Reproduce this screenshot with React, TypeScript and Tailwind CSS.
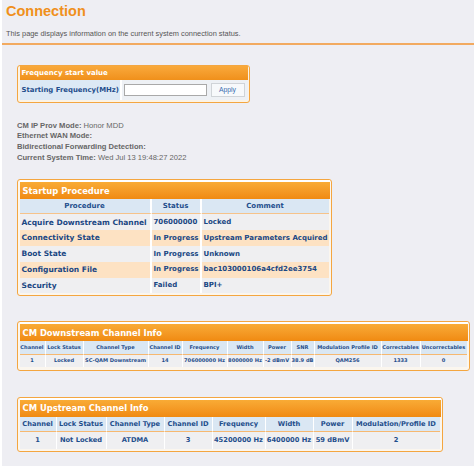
const sans = "font-['Liberation_Sans',Arial,sans-serif]";
const dv = "font-['DejaVu_Sans',Verdana,sans-serif]";

const startup = [
  ["Acquire Downstream Channel", "706000000", "Locked"],
  ["Connectivity State", "In Progress", "Upstream Parameters Acquired"],
  ["Boot State", "In Progress", "Unknown"],
  ["Configuration File", "In Progress", "bac103000106a4cfd2ee3754"],
  ["Security", "Failed", "BPI+"],
];

const downHead = [
  "Channel",
  "Lock Status",
  "Channel Type",
  "Channel ID",
  "Frequency",
  "Width",
  "Power",
  "SNR",
  "Modulation Profile ID",
  "Correctables",
  "Uncorrectables",
];
const downRow = ["1", "Locked", "SC-QAM Downstream", "14", "706000000 Hz", "8000000 Hz", "-2 dBmV", "38.9 dB", "QAM256", "1333", "0"];

const upHead = ["Channel", "Lock Status", "Channel Type", "Channel ID", "Frequency", "Width", "Power", "Modulation/Profile ID"];
const upRow = ["1", "Not Locked", "ATDMA", "3", "45200000 Hz", "6400000 Hz", "59 dBmV", "2"];

function BoxHeader({ title }: { title: string }) {
  return (
    <div className="h-[19px] border-t-2 border-white bg-linear-to-b from-[#f9ab35] to-[#f08a10] px-[3px] flex items-center">
      <span className="text-[8.4px] font-bold text-white leading-none">{title}</span>
    </div>
  );
}

export default function App() {
  return (
    <div className="w-[474px] h-[471px] bg-white overflow-hidden">
      <div className="h-[466px] bg-[#eeeef3] ml-[2px]">
        {/* Title */}
        <div className="px-[4px] pt-[3px]">
          <h1 className={`${sans} text-[14.5px] font-bold text-[#f0901c] leading-[17px]`}>Connection</h1>
          <p className={`${sans} text-[7.4px] text-[#555] mt-[9px] leading-[10px]`}>
            This page displays information on the current system connection status.
          </p>
        </div>
        <div className="h-[2px] bg-[#f2aa60] mt-[4px]" />

        <div className={`${dv} ml-[15px]`}>
          {/* Frequency start value */}
          <div className="mt-[20px] w-[233px] rounded-[3px] border-[1.5px] border-[#f4a640] bg-[#fbf3e6] px-[1.5px] pb-[1.5px]">
            <div className="h-[14px] bg-linear-to-b from-[#f9a93a] to-[#f0901a] px-[2px] flex items-center">
              <span className="text-[7px] font-bold text-white leading-none">Frequency start value</span>
            </div>
            <div className="flex h-[20px]">
              <div className="w-[102px] bg-[#dce9f5] border-r-[2px] border-white flex items-center px-[2px]">
                <span className="text-[6.9px] font-bold text-[#1f4e8c] whitespace-nowrap">Starting Frequency(MHz)</span>
              </div>
              <div className="flex-1 bg-[#eef1f5] flex items-center pl-[2px] gap-[4px]">
                <div className="w-[83px] h-[12px] bg-white border border-[#a9a9a9]" />
                <div className="w-[34px] h-[14px] bg-[#f7f9fb] border border-[#d0d4d8] flex items-center justify-center">
                  <span className={`${sans} text-[6.8px] text-[#3a6db0]`}>Apply</span>
                </div>
              </div>
            </div>
          </div>

          {/* Info lines */}
          <div className={`${sans} mt-[18px] text-[7.6px] leading-[10.7px] text-[#666]`}>
            <div>
              <b>CM IP Prov Mode:</b> Honor MDD
            </div>
            <div>
              <b>Ethernet WAN Mode:</b>
            </div>
            <div>
              <b>Bidirectional Forwarding Detection:</b>
            </div>
            <div>
              <b>Current System Time:</b> Wed Jul 13 19:48:27 2022
            </div>
          </div>

          {/* Startup Procedure */}
          <div className="mt-[16px] w-[315px] rounded-[3px] border-[1.5px] border-[#f4a640] bg-[#fbf6ee] px-[1.5px] pb-[2px]">
            <BoxHeader title="Startup Procedure" />
            <div className="grid grid-cols-[132px_50px_127px]">
              {["Procedure", "Status", "Comment"].map((h, i) => (
                <div
                  key={h}
                  className={`h-[15px] bg-[#dae7f3] border-b border-[#f6c38a] flex items-center justify-center text-[7px] font-bold text-[#1f4e8c] ${i < 2 ? "border-r-[2px] border-r-white" : ""}`}
                >
                  {h}
                </div>
              ))}
              {startup.map((row, r) =>
                row.map((c, i) => (
                  <div
                    key={`${r}-${i}`}
                    className={`h-[15.8px] flex items-center px-[2px] font-bold text-[#1a4783] whitespace-nowrap ${i === 0 ? "text-[7.5px]" : "text-[7px]"} ${r % 2 === 1 ? "bg-[#fde2c3]" : "bg-[#efeff1]"} ${i < 2 ? "border-r-[2px] border-white" : ""}`}
                  >
                    {c}
                  </div>
                ))
              )}
            </div>
          </div>

          {/* CM Downstream Channel Info */}
          <div className="mt-[25px] w-[453px] rounded-[3px] border-[1.5px] border-[#f4a640] bg-[#fbf6ee] px-[1.5px] pb-[2.5px]">
            <BoxHeader title="CM Downstream Channel Info" />
            <div className="grid grid-cols-[26px_38px_65px_34px_45px_36px_28px_23px_67px_39px_46px]">
              {downHead.map((h, i) => (
                <div
                  key={h}
                  className={`h-[14px] bg-[#dae7f3] border-b border-[#f6b870] flex items-center justify-center text-[5.1px] font-bold text-[#1f4e8c] whitespace-nowrap ${i < 10 ? "border-r border-r-white" : ""}`}
                >
                  {h}
                </div>
              ))}
              {downRow.map((c, i) => (
                <div
                  key={i}
                  className={`h-[12px] bg-[#efeff1] flex items-center justify-center text-[5.1px] font-bold text-[#1f4e8c] whitespace-nowrap ${i < 10 ? "border-r border-white" : ""}`}
                >
                  {c}
                </div>
              ))}
            </div>
          </div>

          {/* CM Upstream Channel Info */}
          <div className="mt-[26px] w-[426px] rounded-[3px] border-[1.5px] border-[#f4a640] bg-[#fbf6ee] px-[1.5px] pb-[2px]">
            <BoxHeader title="CM Upstream Channel Info" />
            <div className="grid grid-cols-[37px_50px_58px_48px_53px_48px_39px_87px]">
              {upHead.map((h, i) => (
                <div
                  key={h}
                  className={`h-[15px] bg-[#dae7f3] border-b border-[#f6b870] flex items-center justify-center text-[6.7px] font-bold text-[#1f4e8c] whitespace-nowrap ${i < 7 ? "border-r border-r-white" : ""}`}
                >
                  {h}
                </div>
              ))}
              {upRow.map((c, i) => (
                <div
                  key={i}
                  className={`h-[17px] bg-[#efeff1] flex items-center justify-center text-[6.7px] font-bold text-[#1f4e8c] whitespace-nowrap ${i < 7 ? "border-r border-white" : ""}`}
                >
                  {c}
                </div>
              ))}
            </div>
          </div>
        </div>
      </div>
    </div>
  );
}
